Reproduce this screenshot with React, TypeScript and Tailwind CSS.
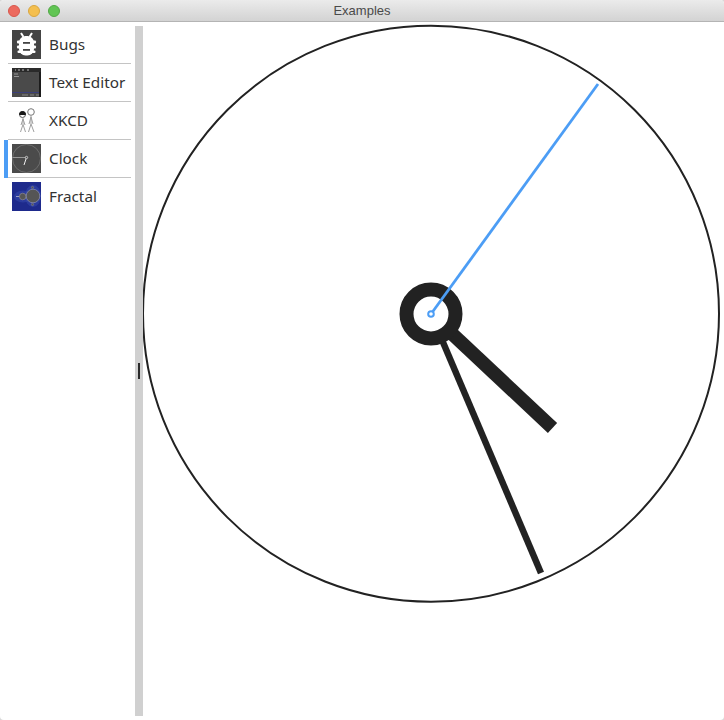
const BugIcon = () => (
  <svg width="29" height="29" viewBox="0 0 29 29">
    <rect width="29" height="29" fill="#444444" />
    <path d="M9 3l2.500 4M20 3l-2.500 4" stroke="#fff" strokeWidth="2" />
    <rect x="7" y="6" width="15" height="19.500" rx="6.500" fill="#fff" />
    <rect x="5" y="10.500" width="19" height="3" rx="1" fill="#fff" />
    <rect x="5" y="15.500" width="19" height="3" rx="1" fill="#fff" />
    <rect x="5.500" y="20.500" width="18" height="2.500" rx="1" fill="#fff" />
    <rect x="11" y="12" width="7" height="1.800" fill="#444444" />
    <rect x="11" y="19" width="7" height="1.800" fill="#444444" />
  </svg>
)

const EditorIcon = () => (
  <svg width="29" height="29" viewBox="0 0 29 29">
    <rect width="29" height="29" fill="#4a4a4a" />
    <rect width="29" height="4" fill="#2a2a2a" />
    <path d="M3 2h1M6 2h2M10 2h2M15 2h2" stroke="#bbb" strokeWidth="1" />
    <path d="M2 6h4M2 8.500h5" stroke="#aaa" strokeWidth="0.800" />
    <rect x="27" y="4" width="2" height="25" fill="#1c1c1c" />
    <rect y="24" width="27" height="1" fill="#3b3f7a" />
    <path d="M10 27h6M18 27h4M24 27h3" stroke="#999" strokeWidth="0.800" />
  </svg>
)

const XkcdIcon = () => (
  <svg width="29" height="29" viewBox="0 0 29 29" fill="none" stroke="#a0a0a0" strokeWidth="1">
    <circle cx="10.500" cy="8.500" r="3" fill="#fff" stroke="#555" />
    <path d="M7.500 8.500a3 3 0 0 1 6 0z" fill="#1a1a1a" stroke="#1a1a1a" />
    <path d="M11 11.500v7M11 13l-2 6M11 13l2 6M11 18.500l-2.500 7.500M11 18.500l2.500 7.500" />
    <circle cx="19" cy="6" r="3.300" fill="#fff" stroke="#777" />
    <path d="M19 9.500v8.500M19 11l-2 7M19 11l2 7M19 18l-2.500 8M19 18l3 8" />
  </svg>
)

const ClockIcon = () => (
  <svg width="29" height="29" viewBox="0 0 29 29" fill="none">
    <rect width="29" height="29" fill="#4b4b4b" />
    <circle cx="14.500" cy="14.500" r="14" stroke="#777" strokeWidth="0.800" />
    <path d="M14.500 13.500L0.500 13.500" stroke="#999" strokeWidth="1" />
    <path d="M14.500 13.500L12 21" stroke="#eee" strokeWidth="1" />
    <circle cx="14.500" cy="13.500" r="1.200" fill="#4b4b4b" stroke="#eee" strokeWidth="0.700" />
  </svg>
)

const FractalIcon = () => (
  <svg width="29" height="29" viewBox="0 0 29 29">
    <rect width="29" height="29" fill="#1e2a8c" />
    <ellipse cx="11" cy="14.500" rx="9" ry="6" fill="#3347a8" opacity="0.600" />
    <ellipse cx="21" cy="14" rx="8" ry="11" fill="#3347a8" opacity="0.600" />
    <path d="M4 14.500h4" stroke="#9a9fc8" strokeWidth="1" />
    <circle cx="10.700" cy="14.500" r="3.300" fill="#555" stroke="#8f8a90" strokeWidth="0.700" />
    <circle cx="21" cy="14" r="6.800" fill="#555" stroke="#8f93b5" strokeWidth="0.700" />
    <circle cx="20.500" cy="5.500" r="1.200" fill="#555" stroke="#8f93b5" strokeWidth="0.400" />
    <circle cx="20.500" cy="22.500" r="1.200" fill="#555" stroke="#8f93b5" strokeWidth="0.400" />
  </svg>
)

const items = [
  { label: "Bugs", icon: <BugIcon /> },
  { label: "Text Editor", icon: <EditorIcon /> },
  { label: "XKCD", icon: <XkcdIcon /> },
  { label: "Clock", icon: <ClockIcon />, selected: true },
  { label: "Fractal", icon: <FractalIcon />, last: true },
]

const App = () => {
  return (
    <div className="w-[724px] h-[720px] bg-[#d8d8d8]">
      <div className="w-full h-full flex flex-col bg-white overflow-hidden rounded-t-[4px] rounded-b-[4px] font-['Noto_Sans',sans-serif]">
        {/* title bar */}
        <div className="h-[22px] shrink-0 flex items-center border-b border-[#b4b4b4] bg-gradient-to-b from-[#ebebeb] to-[#d3d3d3]">
          <div className="w-[68px] flex items-center gap-2 pl-2">
            <div className="w-3 h-3 rounded-full bg-[#ec6a5e] border border-[#d8574c]"></div>
            <div className="w-3 h-3 rounded-full bg-[#f4bf4f] border border-[#d9a63f]"></div>
            <div className="w-3 h-3 rounded-full bg-[#61c554] border border-[#52a846]"></div>
          </div>
          <div className="flex-1 pr-[68px] text-center text-[13px] text-[#4a4a4a] font-['Liberation_Sans',sans-serif]">Examples</div>
        </div>

        {/* body */}
        <div className="flex h-[694px] pt-1 shrink-0">
          {/* sidebar */}
          <div className="w-[135px] shrink-0 flex flex-col pl-1 pr-1">
            {items.map((item) => (
              <div key={item.label} className={`h-[38px] flex border-l-4 ${item.selected ? "border-[#4c9df5]" : "border-transparent"}`}>
                <div className={`flex-1 flex items-center gap-2 pl-1 border-b ${item.last ? "border-transparent" : "border-[#c4c4c4]"}`}>
                  {item.icon}
                  <span className="text-[15.3px] text-[#333333] whitespace-nowrap">{item.label}</span>
                </div>
              </div>
            ))}
          </div>

          {/* splitter */}
          <div className="w-2 shrink-0 bg-[#d0d0d0] flex items-center pl-[3px] relative z-10">
            <div className="w-0.5 h-4 bg-[#2a2a2a] mt-[-1px]"></div>
          </div>

          {/* clock */}
          <svg className="shrink-0 overflow-visible" width="581" height="690" viewBox="143 26 581 690" fill="none">
            <circle cx="431" cy="313.700" r="288" stroke="#222222" strokeWidth="2" />
            <line x1="431" y1="314" x2="552.500" y2="428" stroke="#222222" strokeWidth="13.500" />
            <line x1="431" y1="314" x2="541" y2="573" stroke="#222222" strokeWidth="6.500" />
            <circle cx="431" cy="314" r="24.500" fill="#ffffff" stroke="#222222" strokeWidth="14" />
            <line x1="431" y1="314" x2="598" y2="84" stroke="#4c9df5" strokeWidth="2.800" />
            <circle cx="431" cy="314" r="2.800" fill="#ffffff" stroke="#4c9df5" strokeWidth="2" />
          </svg>
        </div>
      </div>
    </div>
  )
}

export default App
